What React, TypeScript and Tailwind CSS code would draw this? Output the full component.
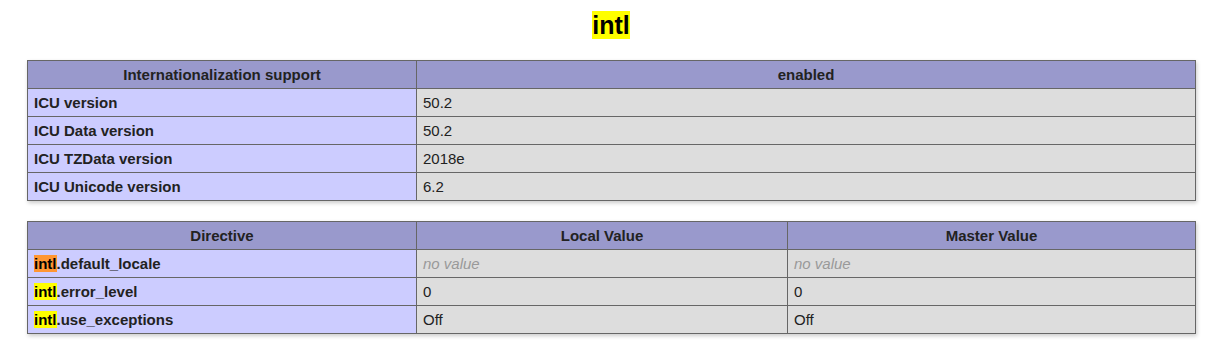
import React from 'react';

const hl = 'bg-[#ffff00] text-black';
const cur = 'bg-[#ff9632] text-black';

const cell = 'border border-[#666666] px-[6px] py-[5px] align-baseline leading-[17px]';
const th = `${cell} bg-[#9999cc] font-bold text-center`;
const e = `${cell} bg-[#ccccff] font-bold`;
const v = `${cell} bg-[#dddddd]`;

const info = [
    ['ICU version', '50.2'],
    ['ICU Data version', '50.2'],
    ['ICU TZData version', '2018e'],
    ['ICU Unicode version', '6.2'],
];

const directives = [
    { name: 'default_locale', local: null, master: null, current: true },
    { name: 'error_level', local: '0', master: '0' },
    { name: 'use_exceptions', local: 'Off', master: 'Off' },
];

const NoValue = () => <i className="text-[#999999]">no value</i>;

export default function App() {
    return (
        <div className="min-h-[348px] bg-white text-[#222222] font-['Liberation_Sans',Arial,sans-serif] text-[15px]">
            <div className="pt-[11px] pl-[5px] flex justify-center">
                <h2 className="text-[25px] font-bold leading-[28px]">
                    <span className={hl}>intl</span>
                </h2>
            </div>

            {/* Module info */}
            <table className="mt-[21px] ml-[27px] w-[1169px] table-fixed border-collapse shadow-[1px_2px_4px_#cccccc]">
                <colgroup>
                    <col className="w-[389px]" />
                    <col />
                </colgroup>
                <tbody>
                    <tr>
                        <th className={th}>Internationalization support</th>
                        <th className={th}>enabled</th>
                    </tr>
                    {info.map(([k, val]) => (
                        <tr key={k}>
                            <td className={e}>{k}</td>
                            <td className={v}>{val}</td>
                        </tr>
                    ))}
                </tbody>
            </table>

            {/* Directives */}
            <table className="mt-[20px] ml-[27px] w-[1169px] table-fixed border-collapse shadow-[1px_2px_4px_#cccccc]">
                <colgroup>
                    <col className="w-[389px]" />
                    <col className="w-[371px]" />
                    <col />
                </colgroup>
                <tbody>
                    <tr>
                        <th className={th}>Directive</th>
                        <th className={th}>Local Value</th>
                        <th className={th}>Master Value</th>
                    </tr>
                    {directives.map((d) => (
                        <tr key={d.name}>
                            <td className={e}>
                                <span className={d.current ? cur : hl}>intl</span>.{d.name}
                            </td>
                            <td className={v}>{d.local ?? <NoValue />}</td>
                            <td className={v}>{d.master ?? <NoValue />}</td>
                        </tr>
                    ))}
                </tbody>
            </table>
        </div>
    );
}
